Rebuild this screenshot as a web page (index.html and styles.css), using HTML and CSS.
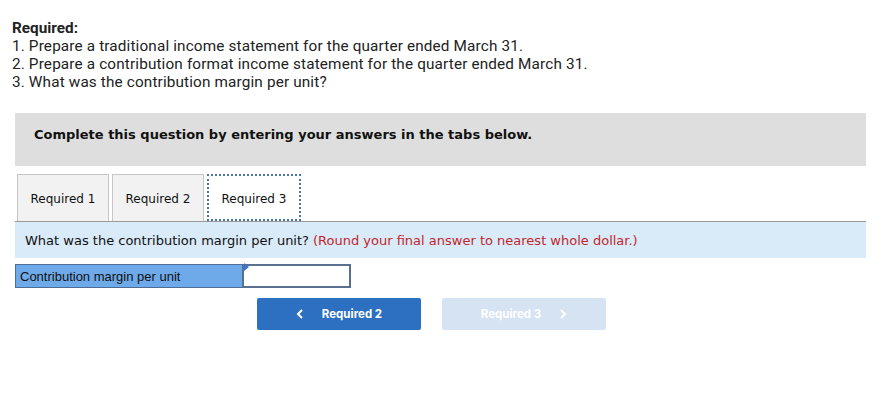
FILE: index.html
```
<!DOCTYPE html>
<html>
<head>
<meta charset="utf-8">
<link rel="stylesheet" href="styles.css">
</head>
<body>
<div class="page">
  <div class="intro">
    <div class="req-title">Required:</div>
    <div class="req-line">1. Prepare a traditional income statement for the quarter ended March 31.</div>
    <div class="req-line">2. Prepare a contribution format income statement for the quarter ended March 31.</div>
    <div class="req-line">3. What was the contribution margin per unit?</div>
  </div>
  <div class="panel">
    <div class="instruct">Complete this question by entering your answers in the tabs below.</div>
    <div class="tabs">
      <div class="tab">Required 1</div>
      <div class="tab">Required 2</div>
      <div class="tab active">Required 3</div>
    </div>
    <div class="question">What was the contribution margin per unit? <span class="hint">(Round your final answer to nearest whole dollar.)</span></div>
    <div class="answer-row">
      <div class="label-cell">Contribution margin per unit</div>
      <div class="input-cell"><span class="marker"></span></div>
    </div>
    <div class="nav">
      <div class="btn prev">
        <svg class="chev" width="8" height="10" viewBox="0 0 8 10"><path d="M6 1 L2 5 L6 9" fill="none" stroke="#fff" stroke-width="2"/></svg>
        Required 2
      </div>
      <div class="btn next">
        Required 3
        <svg class="chev" width="8" height="10" viewBox="0 0 8 10"><path d="M2 1 L6 5 L2 9" fill="none" stroke="#fff" stroke-width="2"/></svg>
      </div>
    </div>
  </div>
</div>
</body>
</html>
```
FILE: styles.css
```
* { box-sizing: border-box; }
body {
  margin: 0;
  background: #fff;
  font-family: Roboto, "Open Sans", "Liberation Sans", sans-serif;
}
.page {
  padding: 19px 0 0 12px;
}
.intro {
  font-size: 15.3px;
  letter-spacing: 0.15px;
  line-height: 18px;
  color: #222;
}
.req-title { font-weight: bold; letter-spacing: 0; }
.panel {
  margin-left: 3px;
  width: 851px;
  margin-top: 22px;
}
.instruct {
  background: #dedede;
  height: 53px;
  padding: 0 0 10px 19px;
  display: flex;
  align-items: center;
  font-family: "DejaVu Sans", Verdana, sans-serif;
  font-weight: bold;
  font-size: 13px;
  color: #111;
}
.tabs {
  display: flex;
  gap: 3px;
  padding-left: 2px;
  margin-top: 8px;
  border-bottom: 1px solid #999;
}
.tab {
  width: 92px;
  height: 47px;
  display: flex;
  align-items: center;
  justify-content: center;
  padding-top: 2px;
  background: #f2f2f2;
  border: 1px solid #c6c6c6;
  border-bottom: none;
  font-family: "DejaVu Sans", Verdana, sans-serif;
  font-size: 12px;
  color: #111;
}
.tab.active {
  width: 94px;
  background: #fff;
  border: 2px dotted #4a74a8;
}
.question {
  background: #d9eaf8;
  height: 36px;
  padding-left: 10px;
  padding-top: 1px;
  display: flex;
  align-items: center;
  gap: 4px;
  font-family: "DejaVu Sans", Verdana, sans-serif;
  font-size: 13px;
  color: #111;
}
.hint { color: #c1272d; }
.answer-row {
  display: flex;
  margin-top: 6px;
  height: 24px;
}
.label-cell {
  width: 227px;
  background: #6ea9e9;
  border: 1px solid #4d6d97;
  border-right: none;
  display: flex;
  align-items: center;
  padding-left: 4px;
  font-family: "Liberation Sans", Arial, sans-serif;
  font-size: 13px;
  color: #111;
}
.input-cell {
  position: relative;
  width: 109px;
  background: #fff;
  border: 2px solid #5a7090;
}
.marker {
  position: absolute;
  left: 0;
  top: -3px;
  width: 0;
  height: 0;
  border-top: 4px solid transparent;
  border-bottom: 4px solid transparent;
  border-left: 5px solid #3b74c9;
}
.nav {
  display: flex;
  gap: 21px;
  margin-top: 10px;
  padding-left: 242px;
}
.btn {
  width: 164px;
  height: 32px;
  border-radius: 2px;
  display: flex;
  align-items: center;
  justify-content: center;
  gap: 18px;
  font-family: "Inter", "Open Sans", sans-serif;
  font-weight: bold;
  font-size: 11.5px;
  color: #fff;
}
.btn.prev { background: #2d6fc0; }
.btn.next { background: #d6e3f3; }
.chev { display: block; }
```
